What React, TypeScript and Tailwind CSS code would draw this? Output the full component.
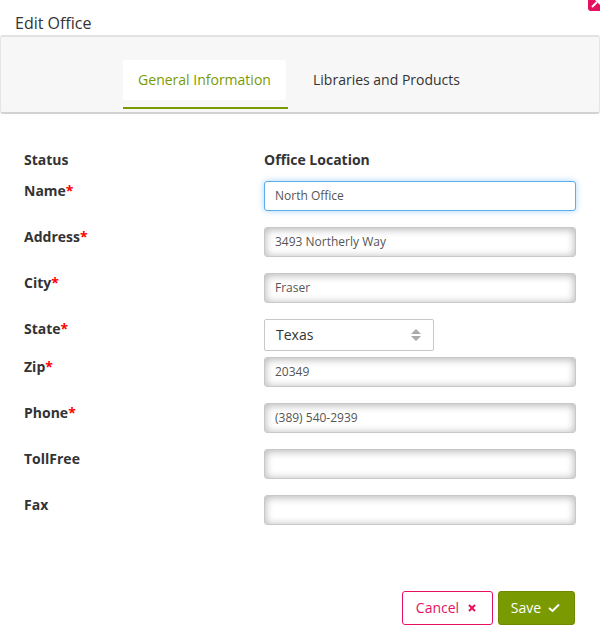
// App.tsx — Edit Office modal
const inputClass =
  'block h-[30px] w-[312px] rounded-[3px] border border-[#c8c8c8] bg-white px-[10px] pb-[2px] text-[12px] text-[#555] outline-none shadow-[inset_0_1px_8px_rgba(0,0,0,0.32)]';

type Field = { label: string; value: string; required: boolean; focused?: boolean };

function Label({ text, required }: { text: string; required: boolean }) {
  return (
    <label className="w-[240px] shrink-0 text-[14px] leading-[20px] font-bold text-[#333]">
      {text}
      {required && <span className="text-[#f00]">*</span>}
    </label>
  );
}

function Row({ label, value, required, focused }: Field) {
  return (
    <div className="mb-4 flex">
      <Label text={label} required={required} />
      <input
        readOnly
        value={value}
        className={
          focused
            ? 'block h-[30px] w-[312px] rounded-[3px] border border-[#5aaeef] bg-white px-[10px] pb-[2px] text-[12px] text-[#555] outline-none shadow-[0_0_6px_rgba(90,174,239,0.5)]'
            : inputClass
        }
      />
    </div>
  );
}

export default function App() {
  return (
    <div className="relative h-[639px] w-[600px] overflow-hidden bg-white font-['Open_Sans',sans-serif] text-[#333]">
      {/* close corner */}
      <div className="absolute top-[-3px] left-[588px] h-[14px] w-[14px] overflow-hidden rounded-[3px] bg-[#e5105f]">
        <svg width="14" height="14" viewBox="0 0 14 14" className="text-white">
          <path d="M4 10 L9 5" stroke="currentColor" strokeWidth="2" />
          <path d="M7 3 H13 V9 Z" fill="currentColor" />
        </svg>
      </div>

      <h2 className="h-[35px] pt-[13px] pl-[15px] text-[16px] leading-[20px] font-normal text-[#333]">Edit Office</h2>

      {/* tabs */}
      <div className="h-[79px] rounded-[3px] border-t-2 border-r border-b-2 border-l border-t-[#e2e2e2] border-r-[#e6e6e6] border-b-[#d2d2d2] border-l-[#e6e6e6] bg-[#f7f7f7] pt-[23px] pl-[122px]">
        <div className="flex">
          <div className="h-[49px] w-[165px] border-b-2 border-[#7a9a01]">
            <div className="flex h-[40px] w-[163px] items-center justify-center rounded-[3px] bg-white pb-[2px] text-[14px] text-[#7a9a01]">
              General Information
            </div>
          </div>
          <div className="flex h-[40px] items-center pb-[2px] pl-[25px] text-[14px] text-[#333]">Libraries and Products</div>
        </div>
      </div>

      {/* form */}
      <div className="pt-[36px] pl-6">
        <div className="mb-[11px] flex text-[14px] leading-[20px] font-bold">
          <div className="w-[240px] shrink-0">Status</div>
          <div>Office Location</div>
        </div>
        <Row label="Name" value="North Office" required focused />
        <Row label="Address" value="3493 Northerly Way" required />
        <Row label="City" value="Fraser" required />
        <div className="mb-[6px] flex">
          <Label text="State" required />
          <div className="flex h-[32px] w-[170px] items-center justify-between rounded-[2px] border border-[#c8c8c8] bg-white pr-[12px] pl-[11px] text-[14px] text-[#333]">
            <span className="pb-[2px]">Texas</span>
            <svg width="10" height="14" viewBox="0 0 10 14" className="text-[#aaa]">
              <path d="M5 1 L10 6 H0 Z M0 8 H10 L5 13 Z" fill="currentColor" />
            </svg>
          </div>
        </div>
        <Row label="Zip" value="20349" required />
        <Row label="Phone" value="(389) 540-2939" required />
        <Row label="TollFree" value="" required={false} />
        <Row label="Fax" value="" required={false} />
      </div>

      {/* actions */}
      <div className="mt-[66px] flex justify-end gap-[5px] pr-[25px]">
        <button className="flex h-[34px] w-[91px] items-center justify-center gap-[9px] rounded-[3px] border border-[#e5105f] bg-white pr-[3px] pb-[2px] text-[14px] text-[#e5105f]">
          Cancel
          <svg width="8" height="8" viewBox="0 0 8 8" className="mt-[2px]">
            <path d="M1 1 L7 7 M7 1 L1 7" stroke="#e5105f" strokeWidth="2" />
          </svg>
        </button>
        <button className="flex h-[34px] w-[77px] items-center justify-center gap-[7px] rounded-[3px] border border-[#6d8a01] bg-[#7a9a01] pr-[2px] pb-[2px] text-[14px] text-white">
          Save
          <svg width="12" height="10" viewBox="0 0 12 10" className="mt-[2px]">
            <path d="M1 5 L4.5 8 L11 1.5" stroke="#fff" strokeWidth="2" fill="none" />
          </svg>
        </button>
      </div>
    </div>
  );
}
